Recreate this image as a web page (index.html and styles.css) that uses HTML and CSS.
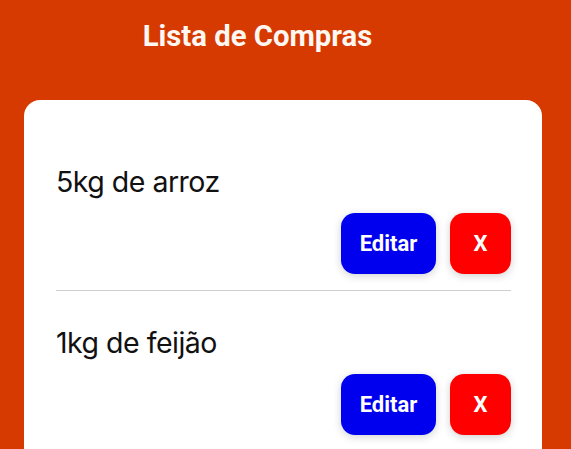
FILE: index.html
```html
<!DOCTYPE html>
<html lang="pt-BR">
<head>
<meta charset="utf-8">
<title>Lista de Compras</title>
<link rel="stylesheet" href="styles.css">
</head>
<body>
<header class="header">
  <h1 class="title">Lista de Compras</h1>
</header>
<main class="card">
  <div class="item">
    <div class="name">5kg de arroz</div>
    <div class="actions">
      <button class="btn btn-edit">Editar</button>
      <button class="btn btn-delete">X</button>
    </div>
  </div>
  <div class="item">
    <div class="name">1kg de feijão</div>
    <div class="actions">
      <button class="btn btn-edit">Editar</button>
      <button class="btn btn-delete">X</button>
    </div>
  </div>
</main>
</body>
</html>
```
FILE: styles.css
```css
html, body {
  margin: 0;
  padding: 0;
}
body {
  background: #d63a00;
  height: 449px;
  overflow: hidden;
}
.header {
  padding: 18px 56px 0 0;
}
.title {
  margin: 0;
  text-align: center;
  font-family: Roboto, "Liberation Sans", sans-serif;
  font-weight: 700;
  font-size: 29.3px;
  line-height: 36px;
  color: #fff8f2;
}
.card {
  margin: 46px 0 0 24px;
  width: 518px;
  box-sizing: border-box;
  background: #fff;
  border-radius: 16px;
  padding: 30px 31px 20px 32px;
}
.item {
  padding: 34px 0 16px;
  border-bottom: 1px solid #cfcfcf;
}
.name {
  font-family: Inter, "Liberation Sans", sans-serif;
  font-size: 28.5px;
  letter-spacing: -0.5px;
  line-height: 36px;
  color: #111;
}
.actions {
  margin-top: 13px;
  display: flex;
  justify-content: flex-end;
  gap: 14px;
}
.btn {
  height: 61px;
  border: none;
  border-radius: 14px;
  font-family: Roboto, "Liberation Sans", sans-serif;
  font-weight: 700;
  font-size: 22px;
  color: #fff;
  padding: 0;
  box-shadow: 0 2px 8px rgba(0, 0, 0, 0.18);
}
.btn-edit {
  width: 95px;
  background: #0000ee;
}
.btn-delete {
  width: 61px;
  background: #ff0000;
}
```
